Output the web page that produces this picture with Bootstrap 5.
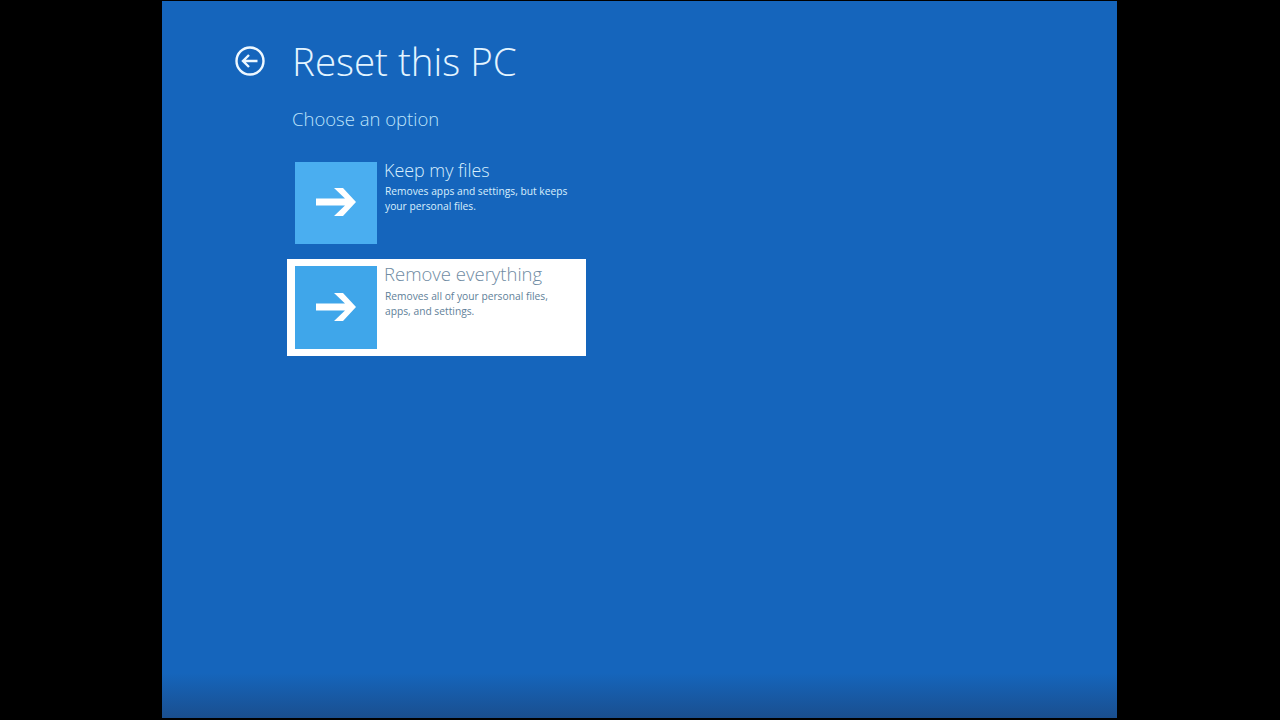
<!DOCTYPE html>
<html lang="en">
<head>
  <meta charset="UTF-8" />
  <title>Reset this PC</title>
  <link href="https://cdn.jsdelivr.net/npm/bootstrap@5.3.0/dist/css/bootstrap.min.css" rel="stylesheet">
  <style>
    body {
      background-color: #000;
      height: 720px;
      overflow: hidden;
      font-family: "Open Sans", "Liberation Sans", sans-serif;
    }

    .screen {
      width: 955px;
      height: 717px;
      margin: 1px 0 0 162px;
      padding: 34px 0 0 73px;
      background: linear-gradient(to bottom, #1565bc 0, #1565bc 672px, #1a4f8f 717px);
      color: #fff;
    }

    .back-btn {
      width: 30px;
      height: 30px;
      margin-right: 27px;
    }

    .page-title {
      font-size: 38.5px;
      font-weight: 300;
      line-height: 52px;
      color: #e3f4ff;
    }

    .page-sub {
      margin: 19px 0 23px 57px;
      font-size: 18.5px;
      font-weight: 300;
      line-height: 26px;
      color: #bfe4fb;
    }

    .options {
      margin-left: 52px;
      width: 299px;
    }

    .option {
      height: 97px;
      padding: 7px 8px;
    }

    .option + .option {
      margin-top: 7px;
    }

    .option.active-option {
      background: #fff;
    }

    .tile {
      width: 82px;
      height: 82px;
      background: #4aaef0;
    }

    .tile svg {
      margin-bottom: 2px;
    }

    .active-option .tile {
      height: 83px;
      background: #3fa6ea;
    }

    .active-option .tile svg {
      margin-bottom: 1px;
    }

    .option-title {
      margin: -6px 0 0 7px;
      font-size: 17.9px;
      font-weight: 300;
      line-height: 28px;
      color: #d5eefc;
    }

    .option-text {
      margin-left: 8px;
      font-size: 10.25px;
      line-height: 15px;
      color: #d8effc;
    }

    .active-option .option-title {
      font-size: 18.5px;
      margin-top: -6px;
      color: #6f8ba3;
    }

    .active-option .option-text {
      margin-top: 1px;
      color: #5f8199;
    }
  </style>
</head>
<body>

  <div class="screen">

    <!-- Header -->
    <div class="d-flex align-items-center">
      <svg class="back-btn" viewBox="0 0 30 30" fill="none" stroke="#eef8ff">
        <circle cx="15" cy="15" r="13.5" stroke-width="2.4"/>
        <path d="M22.5 15H8M14 9l-6 6 6 6" stroke-width="2.4"/>
      </svg>
      <div class="page-title">Reset this PC</div>
    </div>

    <div class="page-sub">Choose an option</div>

    <!-- Options -->
    <div class="options">
      <div class="option d-flex">
        <div class="tile flex-shrink-0 d-flex align-items-center justify-content-center">
          <svg width="40" height="28" viewBox="0 0 40 28" fill="#fff">
            <path d="M18 0H27L40 14 27 28H18L29 17.5H0V10.5H29Z"/>
          </svg>
        </div>
        <div>
          <div class="option-title">Keep my files</div>
          <div class="option-text">Removes apps and settings, but keeps<br>your personal files.</div>
        </div>
      </div>

      <div class="option active-option d-flex">
        <div class="tile flex-shrink-0 d-flex align-items-center justify-content-center">
          <svg width="40" height="28" viewBox="0 0 40 28" fill="#fff">
            <path d="M18 0H27L40 14 27 28H18L29 17.5H0V10.5H29Z"/>
          </svg>
        </div>
        <div>
          <div class="option-title">Remove everything</div>
          <div class="option-text">Removes all of your personal files,<br>apps, and settings.</div>
        </div>
      </div>
    </div>

  </div>

  <script src="https://cdn.jsdelivr.net/npm/bootstrap@5.3.0/dist/js/bootstrap.bundle.min.js"></script>
</body>
</html>
